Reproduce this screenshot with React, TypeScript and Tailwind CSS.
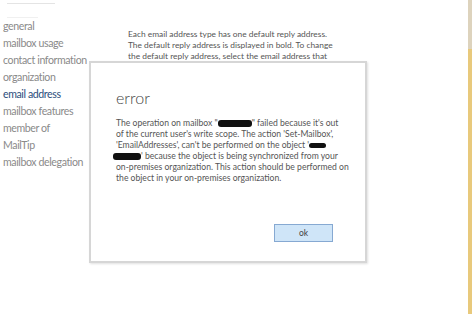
import React from "react";

const navItems = [
  "general",
  "mailbox usage",
  "contact information",
  "organization",
  "email address",
  "mailbox features",
  "member of",
  "MailTip",
  "mailbox delegation",
];

function Blot({ w, h = 7, className = "" }: { w: number; h?: number; className?: string }) {
  return (
    <span
      className={"inline-block align-middle rounded-[3px] bg-[#111] " + className}
      style={{ width: w, height: h }}
    />
  );
}

export default function App() {
  return (
    <div
      className="relative w-[474px] h-[314px] bg-white overflow-hidden flex"
      style={{ fontFamily: 'Lato, "Open Sans", sans-serif' }}
    >
      {/* left nav */}
      <div className="w-[120px] shrink-0 pl-[3px] pt-[3px]">
        <div className="h-px w-[48px] ml-[4px] bg-[#e4e4e4]" />
        <div className="h-px w-[31px] ml-[4px] mt-[13px] bg-[#f0f0f0]" />
        <div className="flex flex-col">
          {navItems.map((t) => (
            <div
              key={t}
              className={
                "h-[17px] leading-[17px] text-[10.6px] whitespace-nowrap tracking-[-0.4px] " +
                (t === "email address" ? "text-[#2c4e7c]" : "text-[#8a8a8a]")
              }
            >
              {t}
            </div>
          ))}
        </div>
      </div>

      {/* main content */}
      <div className="flex-1 pl-[8px] pt-[29px]">
        <div className="text-[8.4px] leading-[11px] text-[#555] whitespace-nowrap">
          Each email address type has one default reply address.
          <br />
          The default reply address is displayed in bold. To change
          <br />
          the default reply address, select the email address that
        </div>
      </div>

      {/* right strip */}
      <div className="w-[6px] shrink-0 flex">
        <div className="w-[4px] flex flex-col">
          <div className="h-[49px] bg-[#ddd3bd]" />
          <div className="flex-1 bg-[#e8c97c]" />
        </div>
        <div className="w-[2px] bg-white" />
      </div>

      {/* error dialog */}
      <div className="absolute left-[89px] top-[61px] w-[278px] h-[202px] bg-white border-2 border-[#d6d6d6] shadow-[1px_1px_2px_rgba(0,0,0,0.12)] flex flex-col pl-[25px] pr-[8px]">
        <div className="mt-[25px] text-[16px] leading-[20px] font-light text-[#444]">
          error
        </div>
        <div className="mt-[10px] text-[8.6px] leading-[11px] text-[#555] whitespace-nowrap">
          The operation on mailbox "<Blot w={34} />" failed because it's out
          <br />
          of the current user's write scope. The action 'Set-Mailbox',
          <br />
          'EmailAddresses', can't be performed on the object '<Blot w={17} h={5} />
          <br />
          <Blot w={28} className="-ml-[3px]" />' because the object is being synchronized from your
          <br />
          on-premises organization. This action should be performed on
          <br />
          the object in your on-premises organization.
        </div>
        <div className="flex-1" />
        <div className="flex justify-end pr-[24px] mb-[19px]">
          <button className="w-[59px] h-[18px] bg-[#cfe5f8] border border-[#86a9d2] text-[8.5px] text-[#444] leading-none">
            ok
          </button>
        </div>
      </div>
    </div>
  );
}
